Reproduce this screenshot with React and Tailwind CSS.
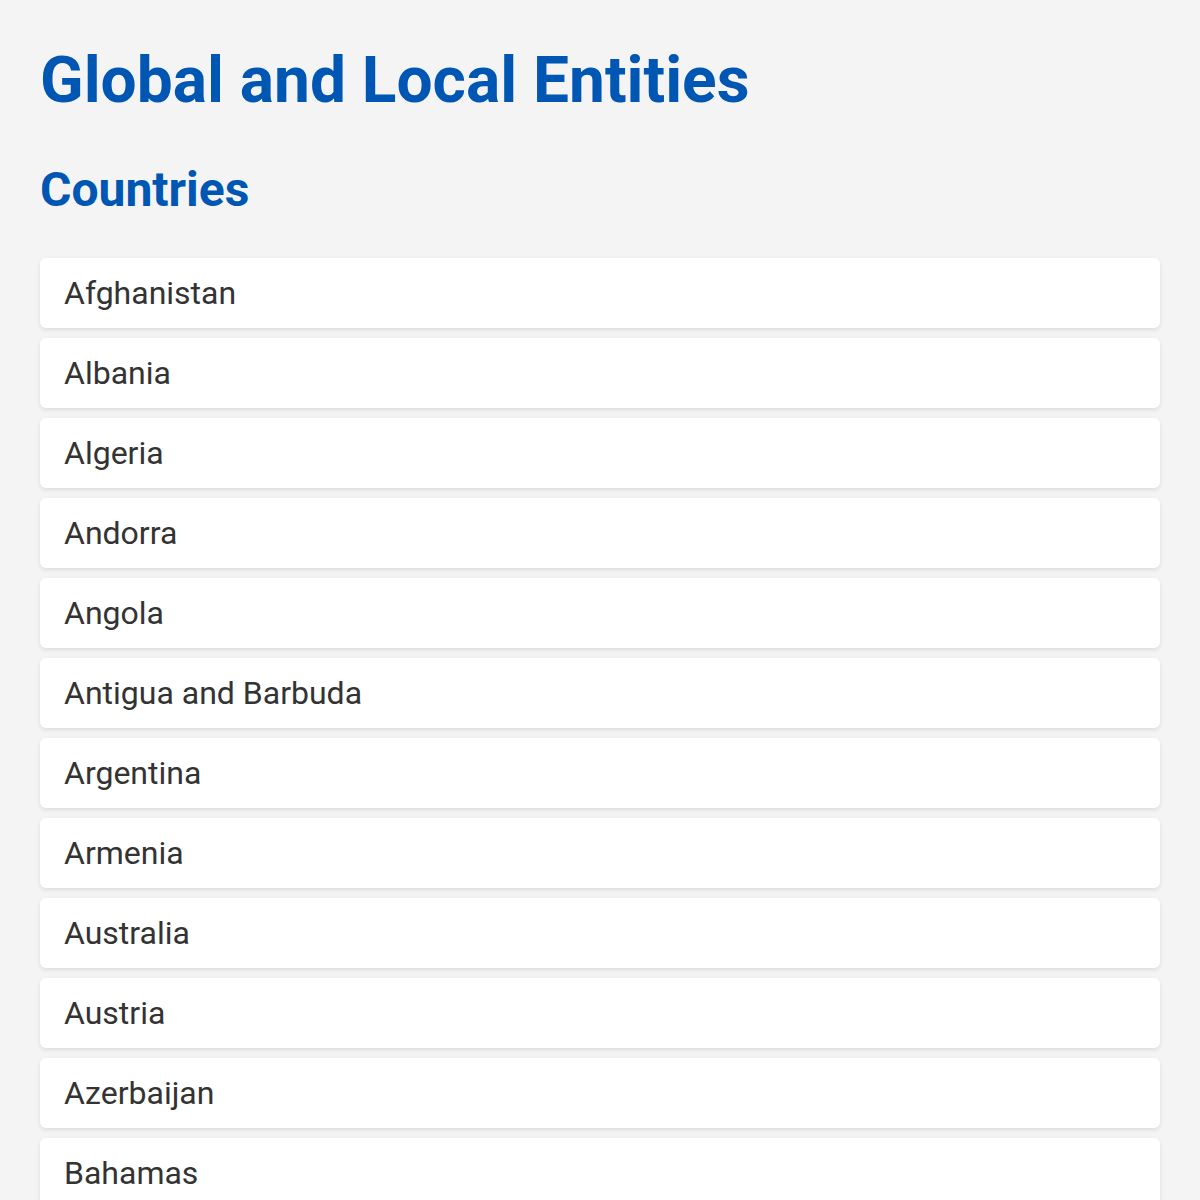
const countries = [
	"Afghanistan",
	"Albania",
	"Algeria",
	"Andorra",
	"Angola",
	"Antigua and Barbuda",
	"Argentina",
	"Armenia",
	"Australia",
	"Austria",
	"Azerbaijan",
	"Bahamas",
	"Bahrain",
];

export default function App() {
	return (
		<div className="min-h-screen bg-[#f4f4f4] p-10 font-['Roboto',sans-serif]">
			<h1 className="mt-[3px] text-[64px] leading-[1.2] font-bold text-[#0056b3]">
				Global and Local Entities
			</h1>
			<h2 className="mt-[41px] text-[48px] leading-[1.2] font-bold text-[#0056b3]">
				Countries
			</h2>
			<ul className="mt-[40px] flex flex-col gap-[10px]">
				{countries.map((c) => (
					<li
						key={c}
						className="h-[70px] flex items-center px-6 bg-white rounded-md shadow-[0_2px_4px_rgba(0,0,0,0.1)] text-[32px] text-[#333]"
					>
						{c}
					</li>
				))}
			</ul>
		</div>
	);
}
